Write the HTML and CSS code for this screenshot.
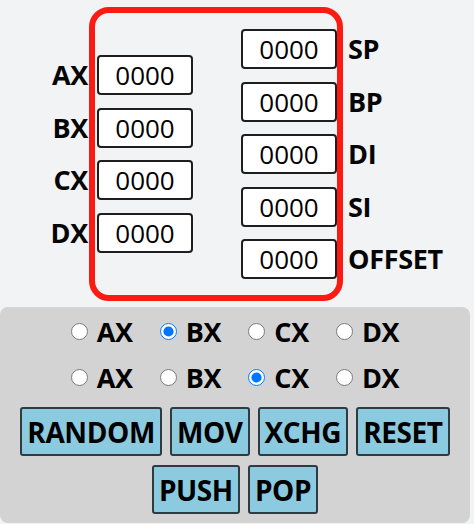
FILE: index.html
```html
<!DOCTYPE html>
<html>
<head>
<meta charset="utf-8">
<link rel="stylesheet" href="styles.css">
</head>
<body>
<div class="top">
  <div class="labels labels-left">
    <div class="lbl">AX</div>
    <div class="lbl">BX</div>
    <div class="lbl">CX</div>
    <div class="lbl">DX</div>
  </div>
  <div class="regbox">
    <div class="col">
      <input class="reg" type="text" value="0000">
      <input class="reg" type="text" value="0000">
      <input class="reg" type="text" value="0000">
      <input class="reg" type="text" value="0000">
    </div>
    <div class="col">
      <input class="reg" type="text" value="0000">
      <input class="reg" type="text" value="0000">
      <input class="reg" type="text" value="0000">
      <input class="reg" type="text" value="0000">
      <input class="reg" type="text" value="0000">
    </div>
  </div>
  <div class="labels labels-right">
    <div class="lbl">SP</div>
    <div class="lbl">BP</div>
    <div class="lbl">DI</div>
    <div class="lbl">SI</div>
    <div class="lbl">OFFSET</div>
  </div>
</div>
<div class="panel">
  <div class="radios">
    <label class="opt"><input type="radio" name="src"><span>AX</span></label>
    <label class="opt"><input type="radio" name="src" checked><span>BX</span></label>
    <label class="opt"><input type="radio" name="src"><span>CX</span></label>
    <label class="opt"><input type="radio" name="src"><span>DX</span></label>
  </div>
  <div class="radios">
    <label class="opt"><input type="radio" name="dst"><span>AX</span></label>
    <label class="opt"><input type="radio" name="dst"><span>BX</span></label>
    <label class="opt"><input type="radio" name="dst" checked><span>CX</span></label>
    <label class="opt"><input type="radio" name="dst"><span>DX</span></label>
  </div>
  <div class="btns">
    <button class="btn">RANDOM</button>
    <button class="btn">MOV</button>
    <button class="btn">XCHG</button>
    <button class="btn">RESET</button>
  </div>
  <div class="btns btns-2">
    <button class="btn">PUSH</button>
    <button class="btn">POP</button>
  </div>
</div>
</body>
</html>
```

FILE: styles.css
```css
html, body {
  margin: 0;
  padding: 0;
  background: #f1f3f4;
  font-family: "Open Sans", "Noto Sans", sans-serif;
  color: #000;
}

.top {
  display: flex;
  align-items: center;
  padding-top: 7px;
}

.labels {
  display: flex;
  flex-direction: column;
  gap: 12.5px;
}

.labels-left {
  width: 88px;
  margin-right: 1px;
  text-align: right;
}

.labels-right {
  margin-left: 5px;
}

.lbl {
  height: 40px;
  line-height: 40px;
  font-size: 27px;
  font-weight: 700;
  letter-spacing: -0.3px;
  color: #050505;
}

.regbox {
  border: 6px solid #fb1b12;
  border-radius: 20px;
  padding: 16px 0 16px 2px;
  display: flex;
  align-items: center;
  gap: 48px;
  width: 240px;
}

.col {
  display: flex;
  flex-direction: column;
  gap: 12.5px;
}

.reg {
  box-sizing: border-box;
  width: 96px;
  height: 40px;
  border: 2px solid #1e1e1e;
  border-radius: 4px;
  background: #fff;
  padding: 0;
  margin: 0;
  font-family: "Open Sans", "Noto Sans", sans-serif;
  font-size: 26px;
  text-align: center;
  color: #000;
}

.panel {
  margin-top: 6px;
  width: 470px;
  background: #d3d3d3;
  border-radius: 8px;
  padding: 1px 0 9px;
  box-sizing: border-box;
}

.radios {
  height: 46px;
  display: flex;
  justify-content: center;
  align-items: center;
  gap: 27px;
}

.opt {
  display: flex;
  align-items: center;
  gap: 9px;
  font-size: 27px;
  font-weight: 700;
  letter-spacing: -0.3px;
}

.opt input {
  width: 17px;
  height: 17px;
  margin: 0;
}

.btns {
  display: flex;
  justify-content: center;
  gap: 8px;
  margin-top: 7px;
}

.btns-2 {
  margin-top: 9px;
}

.btn {
  height: 49px;
  padding: 0 5px;
  background: #8ccadf;
  border: 2px solid #2e3b40;
  border-radius: 3px;
  font-family: "Open Sans", "Noto Sans", sans-serif;
  font-size: 28px;
  font-weight: 700;
  letter-spacing: -0.4px;
  color: #000;
}
```
